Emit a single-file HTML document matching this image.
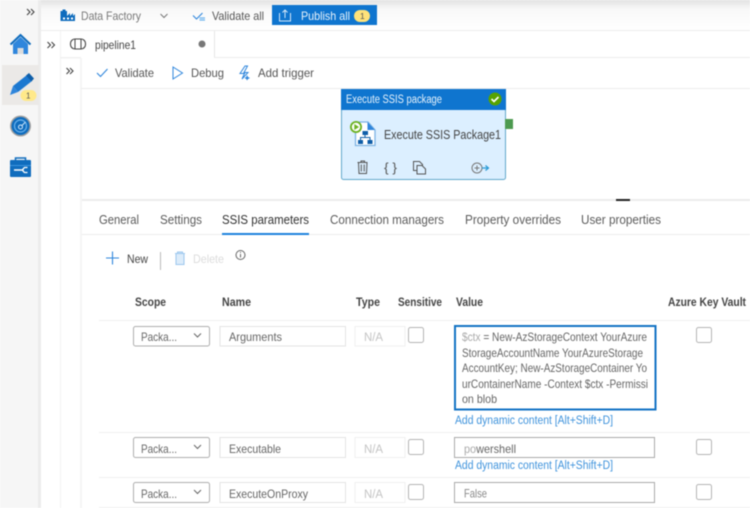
<!DOCTYPE html>
<html><head><meta charset="utf-8"><title>pipeline1</title>
<style>
html,body{margin:0;padding:0;background:#fff;width:750px;height:508px;overflow:hidden}
svg{display:block;filter:blur(.4px)}
text{font-family:"Liberation Sans",sans-serif;font-size:12px;fill:#555}
.h{font-weight:bold;fill:#444;font-size:11.5px}
.l{fill:#3f93dc;font-size:11.5px}
.i{fill:#666;font-size:12px}
.v{fill:#666;font-size:12px}
.t{fill:#5c5c5c;font-size:12.5px}
.in{fill:#fff;stroke:#e4e4e4;stroke-width:1}
.sel{fill:#fff;stroke:#aeaeae;stroke-width:1}
.cb{fill:#fff;stroke:#b4b4b4;stroke-width:1}
.rl{stroke:#f0f0f0;stroke-width:1}
.ic{fill:none;stroke:#444;stroke-width:1.100}
</style></head><body>
<svg width="750" height="508" viewBox="0 0 750 508" xmlns="http://www.w3.org/2000/svg">
<defs>
<linearGradient id="top" x1="0" y1="0" x2="0" y2="1"><stop offset="0" stop-color="#e2e2e2"/><stop offset=".3" stop-color="#f8f8f8"/><stop offset="1" stop-color="#fff"/></linearGradient>
</defs>
<rect width="750" height="508" fill="#fff"/>
<!-- top bar -->
<rect x="41" y="0" width="709" height="30" fill="url(#top)"/>
<rect x="41" y="30" width="709" height="1" fill="#ececec"/>
<!-- left rail -->
<rect x="0" y="0" width="39" height="508" fill="#f6f6f6"/>
<rect x="38" y="0" width="3" height="508" fill="#ececec"/>
<rect x="2" y="65" width="37" height="40" fill="#ebe9e7"/>
<path d="M27 9l3 3-3 3M31 9l3 3-3 3" class="ic"/>
<!-- home -->
<path d="M10.500 44.500L20.500 35 30.500 44.500" fill="none" stroke="#0f6cbd" stroke-width="2"/>
<path d="M13 44L20.500 37 28 44V54H23.500V48H17.500V54H13Z" fill="#2f86dc"/>
<rect x="17.500" y="48" width="6" height="6" fill="#dcdcdc"/>
<!-- pencil -->
<path d="M13 86L27 75 32 81 18 92Z" fill="#1c78d0"/>
<path d="M26 75.500l3-2.500 5 5.500-2.500 3Z" fill="#0f5ea8"/>
<path d="M13 86l5 6-8 3Z" fill="#2f86dc"/>
<rect x="20.500" y="90" width="16" height="11" rx="5.500" fill="#ffe98a"/>
<text x="26" y="98.500" style="font-size:8px;fill:#555">1</text>
<!-- gauge -->
<circle cx="20.500" cy="126" r="10.500" fill="#a0a0a0"/>
<circle cx="20.500" cy="126" r="9" fill="#0f6cbd"/>
<circle cx="20.500" cy="126" r="6" fill="none" stroke="#6db4ee" stroke-width="1.200"/>
<circle cx="20.500" cy="127" r="2" fill="none" stroke="#cfe6fa" stroke-width="1"/>
<path d="M21.500 126l4-4" stroke="#cfe6fa" stroke-width="1"/>
<!-- toolbox -->
<path d="M15.500 161v-3h10v3" fill="none" stroke="#0f6cbd" stroke-width="1.500"/>
<rect x="10" y="160" width="21" height="17" rx="1" fill="#0f6cbd"/>
<rect x="10" y="165" width="21" height="1" fill="#3d95e0"/>
<path d="M14 170h9" stroke="#fff" stroke-width="1.500" fill="none"/>
<path d="M27.500 167.500h-3l-1.500 1.500v2l1.500 1.500h3" stroke="#fff" stroke-width="1.300" fill="none"/>
<!-- top bar content -->
<path d="M60.500 21V11h2V9.500h3V11h1.500v5l3-3v3l3-3v3l2-2v7Z" fill="#0f6cbd"/>
<rect x="63" y="17.500" width="2" height="2" fill="#fff"/><rect x="67" y="17.500" width="2" height="2" fill="#fff"/><rect x="71" y="17.500" width="2" height="2" fill="#fff"/>
<text x="81" y="20" textLength="60" lengthAdjust="spacingAndGlyphs" style="fill:#777;font-size:12px">Data Factory</text>
<path d="M160.500 14l3.500 3.500 3.500-3.500" fill="none" stroke="#777"/>
<path d="M193 15.500l3.500 3.500 6-6" fill="none" stroke="#2f86dc" stroke-width="1.100"/>
<path d="M199.500 18h5.500M199.500 20h5.500" stroke="#6db4ee" stroke-width="1.300"/>
<text x="212" y="20" textLength="52" lengthAdjust="spacingAndGlyphs">Validate all</text>
<rect x="272" y="5" width="105" height="20" fill="#0f75cf"/>
<path d="M280 13.500h-.5V21h11v-7.500H290M285 10.500V18M282.500 12.500l2.500-2.500 2.500 2.500" fill="none" stroke="#d3e7f8" stroke-width="1"/>
<text x="301" y="20" textLength="49" lengthAdjust="spacingAndGlyphs" style="fill:#eaf4fc">Publish all</text>
<rect x="354" y="10" width="16" height="12" rx="6" fill="#ffe27a"/>
<text x="360" y="19" style="font-size:8.500px;fill:#555">1</text>
<!-- tab row -->
<rect x="60" y="31" width="1" height="477" fill="#f3f3f3"/>
<path d="M47.500 42l3 3-3 3M51.500 42l3 3-3 3" class="ic"/>
<rect x="214" y="31" width="1" height="27" fill="#e6e6e6"/>
<rect x="214" y="57" width="536" height="1" fill="#ececec"/>
<rect x="60" y="57" width="21" height="1.500" fill="#f0f0f0"/>
<rect x="70.500" y="39" width="15" height="10" rx="4.500" class="ic"/>
<path d="M75 39.500v9M81 39.500v9" stroke="#444" stroke-width="1"/>
<text x="95" y="49" textLength="41" lengthAdjust="spacingAndGlyphs" style="fill:#444;font-size:12px">pipeline1</text>
<circle cx="202" cy="44" r="3.500" fill="#777"/>
<!-- toolbar -->
<rect x="80" y="58" width="2" height="450" fill="#f5f5f5"/>
<path d="M66.500 68l3 3-3 3M70 68l3 3-3 3" class="ic"/>
<path d="M97 73l3.500 3.500 7-7.500" fill="none" stroke="#2f86dc" stroke-width="1.100"/>
<text x="115" y="77" textLength="39" lengthAdjust="spacingAndGlyphs">Validate</text>
<path d="M173 67v12l9.500-6Z" fill="none" stroke="#2f86dc" stroke-width="1"/>
<text x="191" y="77" textLength="33" lengthAdjust="spacingAndGlyphs">Debug</text>
<path d="M245 66l-5 7.500h4.500l-2.500 5.500 6-6.500h-4l3.500-6.500Z" fill="none" stroke="#2f86dc" stroke-width="1"/>
<path d="M247 75l1 2 2 1-2 1-1 1.500-.7-1.500-1.800-1 1.800-1Z" fill="#2f86dc"/>
<text x="258" y="77" textLength="56" lengthAdjust="spacingAndGlyphs">Add trigger</text>
<rect x="81" y="88" width="669" height="1" fill="#ececec"/>
<!-- node -->
<rect x="341.500" y="89.500" width="164" height="90" rx="2" fill="#dcefff" stroke="#62a8cc"/>
<rect x="341" y="89" width="165" height="21" fill="#0f75cf"/>
<text x="346" y="103" textLength="96" lengthAdjust="spacingAndGlyphs" style="fill:#e6f2fc;font-size:11.500px">Execute SSIS package</text>
<circle cx="495" cy="99" r="6.500" fill="#57a300"/>
<path d="M491.500 99l2.500 2.500 4.500-4.500" fill="none" stroke="#fff" stroke-width="1.600"/>
<rect x="505" y="119" width="8" height="10" fill="#4c9a50"/>
<!-- ssis doc icon -->
<path d="M355.500 122H368l7 8v15.500H355.500Z" fill="#fff" stroke="#7db3e3" stroke-width="1.300"/>
<path d="M367.500 122v8h7.500Z" fill="#2f86dc"/>
<circle cx="356" cy="127" r="6" fill="#6bb120"/>
<circle cx="356" cy="127" r="4.200" fill="#fff"/>
<path d="M354.300 124v6l4.700-3Z" fill="#6bb120"/>
<rect x="362.500" y="131" width="5.500" height="4" fill="#0f5ea8"/>
<rect x="358" y="140" width="5" height="4" fill="#0f5ea8"/>
<rect x="367.500" y="140" width="5" height="4" fill="#0f5ea8"/>
<path d="M365 135v3M360.500 140v-2.500h9.500v2.500" fill="none" stroke="#0f5ea8"/>
<text x="384" y="139" textLength="117" lengthAdjust="spacingAndGlyphs" style="fill:#444;font-size:12.500px">Execute SSIS Package1</text>
<path d="M357.500 162.500h10M361 162.500v-1.500h3.500v1.500M358.500 162.500l.5 11h7.500l.5-11M361.300 164.500v7M364.200 164.500v7" fill="none" stroke="#555" stroke-width="1"/>
<text x="384" y="172" textLength="13" lengthAdjust="spacingAndGlyphs" style="fill:#555;font-size:13px">{ }</text>
<path d="M413.500 161.500h6l3 3v6h-9Z" fill="none" stroke="#555"/>
<path d="M417 165.500h5l3.500 3.500v5H417Z" fill="#dcefff" stroke="#555"/>
<circle cx="477" cy="168" r="5" fill="none" stroke="#777"/>
<path d="M474.500 168h5M477 165.500v5" stroke="#777"/>
<path d="M482 168h6M485.500 165.500l3 2.500-3 2.500" fill="none" stroke="#2b9bd6" stroke-width="1.200"/>
<!-- splitter -->
<rect x="82" y="199" width="668" height="2" fill="#ececec"/>
<rect x="616" y="199" width="14" height="2" fill="#222"/>
<!-- tabs -->
<rect x="82" y="234" width="668" height="1" fill="#ececec"/>
<text class="t" x="99" y="224" textLength="40" lengthAdjust="spacingAndGlyphs">General</text>
<text class="t" x="160" y="224" textLength="42" lengthAdjust="spacingAndGlyphs">Settings</text>
<text class="t" x="222" y="224" textLength="87" lengthAdjust="spacingAndGlyphs" style="fill:#333">SSIS parameters</text>
<text class="t" x="330" y="224" textLength="114" lengthAdjust="spacingAndGlyphs">Connection managers</text>
<text class="t" x="465" y="224" textLength="96" lengthAdjust="spacingAndGlyphs">Property overrides</text>
<text class="t" x="581" y="224" textLength="80" lengthAdjust="spacingAndGlyphs">User properties</text>
<rect x="222" y="233" width="87" height="2" fill="#1c82dc"/>
<!-- new/delete -->
<path d="M106 258h13M112.500 251.500v13" stroke="#2f86dc" stroke-width="1.100"/>
<text x="127" y="263" textLength="21" lengthAdjust="spacingAndGlyphs" style="fill:#444;font-size:12px">New</text>
<rect x="160" y="252" width="1" height="18" fill="#bbb"/>
<path d="M175 253.500h10M177.500 253.500v-1.500h5v1.500M176 253.500v11h8v-11Z" fill="#dcecfa" stroke="#9cc7ee"/>
<text x="193" y="263" textLength="31" lengthAdjust="spacingAndGlyphs" style="fill:#dcdcdc;font-size:12px">Delete</text>
<circle cx="240.500" cy="255" r="4.500" fill="none" stroke="#666"/>
<path d="M240.500 254v3.500M240.500 252v1" stroke="#666"/>
<!-- headers -->
<text class="h" x="135" y="306" textLength="31" lengthAdjust="spacingAndGlyphs">Scope</text>
<text class="h" x="222" y="306" textLength="29" lengthAdjust="spacingAndGlyphs">Name</text>
<text class="h" x="356" y="306" textLength="24" lengthAdjust="spacingAndGlyphs">Type</text>
<text class="h" x="398" y="306" textLength="44" lengthAdjust="spacingAndGlyphs">Sensitive</text>
<text class="h" x="456" y="306" textLength="27" lengthAdjust="spacingAndGlyphs">Value</text>
<text class="h" x="668" y="306" textLength="78" lengthAdjust="spacingAndGlyphs">Azure Key Vault</text>
<path class="rl" d="M99 320.500H750M99 432.500H750M99 477.500H750M99 507.500H750"/>
<!-- row 1 -->
<rect class="sel" x="133.500" y="326.500" width="76" height="19.500" rx="2"/>
<text class="i" x="141" y="341" textLength="36" lengthAdjust="spacingAndGlyphs">Packa...</text>
<path d="M194 333.500l3.500 3.500 3.500-3.500" fill="none" stroke="#666"/>
<rect class="in" x="220" y="326.500" width="125.500" height="19.500"/>
<text class="i" x="229" y="341" textLength="53" lengthAdjust="spacingAndGlyphs">Arguments</text>
<rect x="355" y="326.500" width="50" height="19.500" fill="#fff" stroke="#f0f0f0"/>
<text x="364" y="341" textLength="19" lengthAdjust="spacingAndGlyphs" style="fill:#c4c4c4;font-size:11.500px">N/A</text>
<rect class="cb" x="408.500" y="327.500" width="15" height="15" rx="2"/>
<rect x="455" y="326" width="200.500" height="83.500" fill="#fff" stroke="#1272c4" stroke-width="2"/>
<text class="v" x="462" y="341" textLength="185" lengthAdjust="spacingAndGlyphs"><tspan style="fill:#aaa">$ctx</tspan> = New-AzStorageContext YourAzure</text>
<text class="v" x="462" y="357" textLength="181" lengthAdjust="spacingAndGlyphs">StorageAccountName YourAzureStorage</text>
<text class="v" x="462" y="372" textLength="185" lengthAdjust="spacingAndGlyphs">AccountKey; New-AzStorageContainer Yo</text>
<text class="v" x="462" y="388" textLength="186" lengthAdjust="spacingAndGlyphs">urContainerName -Context $ctx -Permissi</text>
<text class="v" x="462" y="403" textLength="35" lengthAdjust="spacingAndGlyphs">on blob</text>
<text class="l" x="455" y="424" textLength="158" lengthAdjust="spacingAndGlyphs">Add dynamic content [Alt+Shift+D]</text>
<rect class="cb" x="696.500" y="327.500" width="15" height="15" rx="2"/>
<!-- row 2 -->
<rect class="sel" x="133.500" y="437.500" width="76" height="20" rx="2"/>
<text class="i" x="141" y="453" textLength="36" lengthAdjust="spacingAndGlyphs">Packa...</text>
<path d="M194 445l3.500 3.500 3.500-3.500" fill="none" stroke="#666"/>
<rect class="in" x="220" y="437.500" width="125.500" height="20"/>
<text class="i" x="229" y="453" textLength="52" lengthAdjust="spacingAndGlyphs">Executable</text>
<rect x="355" y="437.500" width="50" height="20" fill="#fff" stroke="#f0f0f0"/>
<text x="364" y="453" textLength="19" lengthAdjust="spacingAndGlyphs" style="fill:#c4c4c4;font-size:11.500px">N/A</text>
<rect class="cb" x="408.500" y="439.500" width="15" height="15" rx="2"/>
<rect x="454.500" y="437.500" width="200" height="20" fill="#fff" stroke="#aaa"/>
<text class="v" x="464" y="453" textLength="52" lengthAdjust="spacingAndGlyphs"><tspan style="fill:#aaa">po</tspan>wershell</text>
<text class="l" x="455" y="469" textLength="158" lengthAdjust="spacingAndGlyphs">Add dynamic content [Alt+Shift+D]</text>
<rect class="cb" x="696.500" y="439.500" width="15" height="15" rx="2"/>
<!-- row 3 -->
<rect class="sel" x="133.500" y="482.500" width="76" height="20" rx="2"/>
<text class="i" x="141" y="498" textLength="36" lengthAdjust="spacingAndGlyphs">Packa...</text>
<path d="M194 490l3.500 3.500 3.500-3.500" fill="none" stroke="#666"/>
<rect class="in" x="220" y="482.500" width="125.500" height="20"/>
<text class="i" x="229" y="498" textLength="79" lengthAdjust="spacingAndGlyphs">ExecuteOnProxy</text>
<rect x="355" y="482.500" width="50" height="20" fill="#fff" stroke="#f0f0f0"/>
<text x="364" y="498" textLength="19" lengthAdjust="spacingAndGlyphs" style="fill:#c4c4c4;font-size:11.500px">N/A</text>
<rect class="cb" x="408.500" y="484.500" width="15" height="15" rx="2"/>
<rect x="454.500" y="482.500" width="200" height="20" fill="#fff" stroke="#aaa"/>
<text class="v" x="464" y="497.500" textLength="23" lengthAdjust="spacingAndGlyphs" style="fill:#888;font-size:12px">False</text>
<rect class="cb" x="696.500" y="484.500" width="15" height="15" rx="2"/>
</svg>
</body></html>
